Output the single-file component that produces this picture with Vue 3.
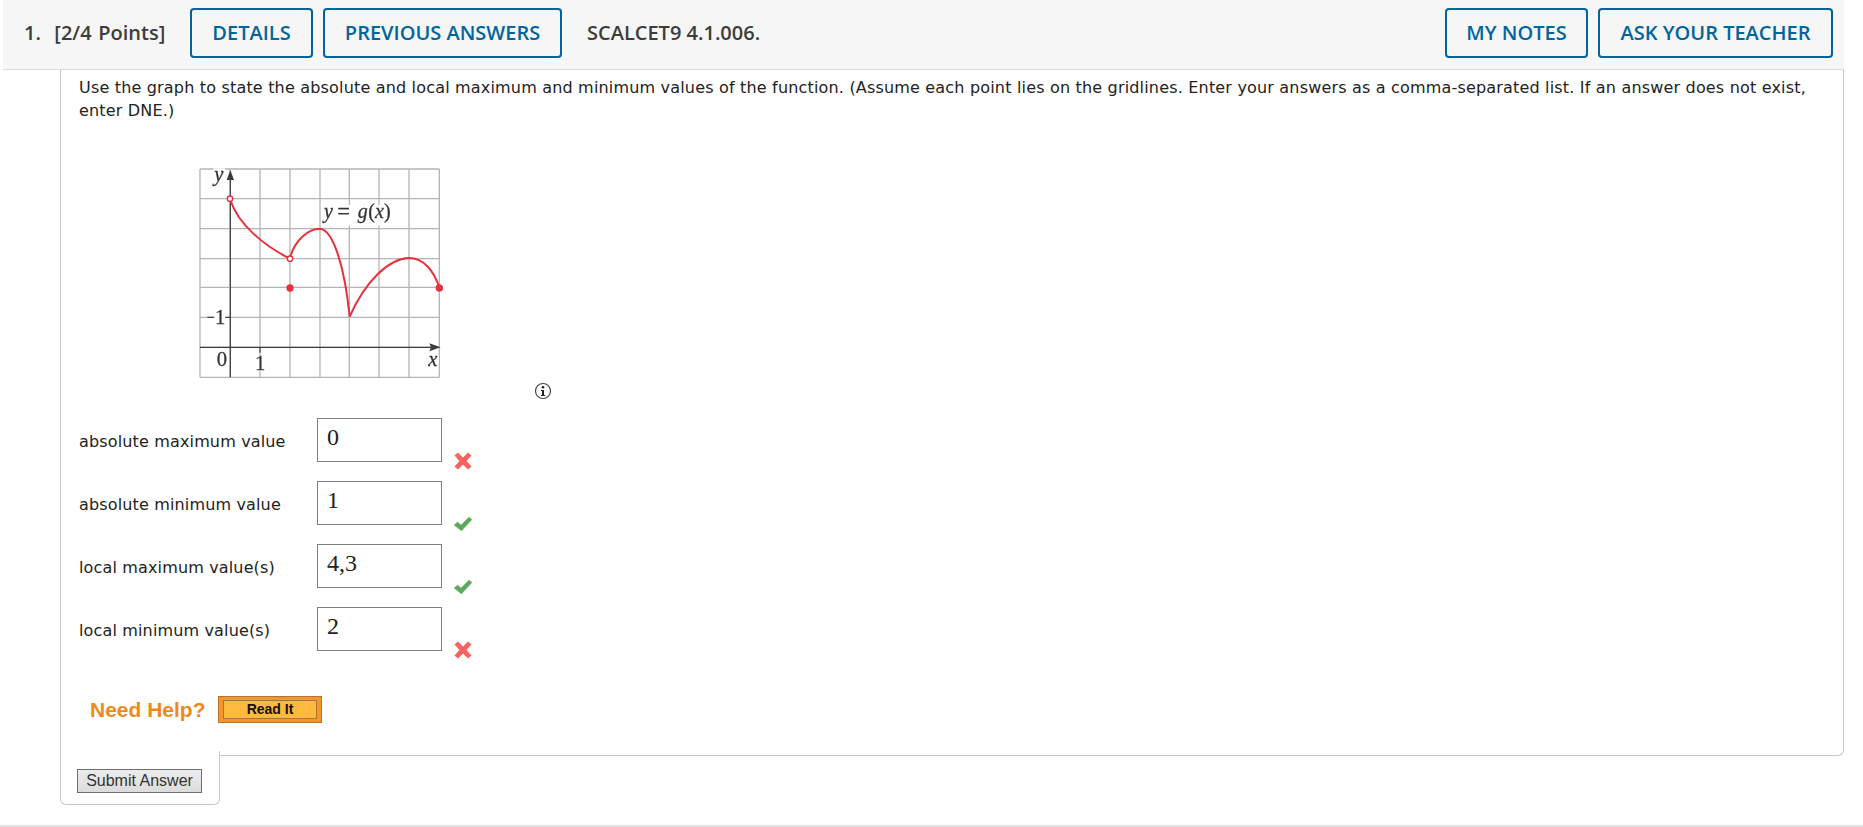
<script setup>
const rows = [
  { label: 'absolute maximum value', value: '0', ok: false },
  { label: 'absolute minimum value', value: '1', ok: true },
  { label: 'local maximum value(s)', value: '4,3', ok: true },
  { label: 'local minimum value(s)', value: '2', ok: false },
]
const vLines = [60, 150, 240, 330, 420, 508, 597, 687, 778]
const hLines = [57, 146, 236, 326, 412, 502, 592, 682]
</script>

<template>
  <div class="page">
    <header class="bar">
      <span class="num">1.&nbsp; [2/4 Points]</span>
      <button class="btn details">DETAILS</button>
      <button class="btn prev">PREVIOUS ANSWERS</button>
      <span class="code">SCALCET9 4.1.006.</span>
      <span class="spacer"></span>
      <button class="btn notes">MY NOTES</button>
      <button class="btn ask">ASK YOUR TEACHER</button>
    </header>

    <section class="panel">
      <p class="question">Use the graph to state the absolute and local maximum and minimum values of the function. (Assume each point lies on the gridlines. Enter your answers as a comma-separated list. If an answer does not exist, enter DNE.)</p>

      <div class="figure">
        <svg class="graph" width="300" height="240" viewBox="0 0 900 720">
          <g stroke="#b5b5b5" stroke-width="4" fill="none">
            <line v-for="x in vLines" :key="'v' + x" :x1="x" :x2="x" y1="57" y2="682" />
            <line v-for="y in hLines" :key="'h' + y" :y1="y" :y2="y" x1="60" x2="778" />
          </g>
          <rect x="100" y="55" width="36" height="48" fill="#fff" />
          <rect x="425" y="165" width="215" height="62" fill="#fff" />
          <rect x="102" y="610" width="42" height="50" fill="#fff" />
          <rect x="225" y="618" width="30" height="46" fill="#fff" />
          <rect x="740" y="615" width="36" height="45" fill="#fff" />
          <rect x="104" y="478" width="32" height="48" fill="#fff" />
          <g stroke="#3c3c3c" stroke-width="3.5" fill="#3c3c3c">
            <line x1="151" y1="80" x2="151" y2="682" />
            <line x1="60" y1="592" x2="760" y2="592" />
            <line x1="82" y1="502" x2="102" y2="502" />
            <line x1="136" y1="502" x2="150" y2="502" />
            <line x1="240" y1="592" x2="240" y2="608" />
            <path d="M151 60 L162 90 L140 90 Z" stroke="none" />
            <path d="M782 592 L748 580 L753 592 L748 604 Z" stroke="none" />
          </g>
          <g font-family="'Liberation Serif', serif" fill="#333" stroke="#333" stroke-width="0.8">
            <text x="103" y="93" font-size="62" font-style="italic">y</text>
            <text x="432" y="205" font-size="60" font-style="italic">y</text>
            <text x="472" y="207" font-size="68">=</text>
            <text x="533" y="205" font-size="60" font-style="italic">g</text>
            <text x="565" y="205" font-size="60">(</text>
            <text x="585" y="205" font-size="60" font-style="italic">x</text>
            <text x="612" y="205" font-size="60">)</text>
            <text x="105" y="522" font-size="62">1</text>
            <text x="110" y="648" font-size="62">0</text>
            <text x="225" y="660" font-size="62">1</text>
            <text x="745" y="648" font-size="62" font-style="italic">x</text>
          </g>
          <g fill="none" stroke="#e8303f" stroke-width="6">
            <path d="M151 150 C175 225 255 288 326 324" />
            <path d="M331 320 C345 270 385 236 420 236 C462 240 495 360 509 500" />
            <path d="M509 500 C555 395 625 326 687 324 C730 324 762 362 778 413" />
          </g>
          <circle cx="150" cy="146" r="8" fill="#fff" stroke="#e8303f" stroke-width="4" />
          <circle cx="330" cy="326" r="8" fill="#fff" stroke="#e8303f" stroke-width="4" />
          <circle cx="330" cy="414" r="11" fill="#e8303f" />
          <circle cx="778" cy="414" r="11" fill="#e8303f" />
        </svg>
        <svg class="info" width="18" height="18" viewBox="0 0 18 18">
          <circle cx="9" cy="9" r="7.5" fill="#fff" stroke="#444" stroke-width="1.2" />
          <circle cx="9" cy="5.3" r="1.3" fill="#222" />
          <path d="M7 8h3v5h1.2v1H6.9v-1H8V9H7z" fill="#222" />
        </svg>
      </div>

      <div class="answers">
        <div v-for="r in rows" :key="r.label" class="row">
          <span class="label">{{ r.label }}</span>
          <span class="field">{{ r.value }}</span>
          <svg v-if="r.ok" class="mark" width="20" height="18" viewBox="0 0 20 18">
            <path d="M1 10 L4.5 7 L8 10 L16 2 L19 4.5 L8.5 16 Z" fill="#5ca85c" stroke="#82c682" stroke-width="0.6" />
          </svg>
          <svg v-else class="mark" width="20" height="18" viewBox="0 0 20 18">
            <path d="M1.5 3.5 L5 0.5 L10 5.5 L15 0.5 L18.5 3.5 L13.5 9 L18.5 14.5 L15 17.5 L10 12.5 L5 17.5 L1.5 14.5 L6.5 9 Z" fill="#f8625f" />
          </svg>
        </div>
      </div>

      <div class="help">
        <span class="need">Need Help?</span>
        <button class="readit"><span>Read It</span></button>
      </div>
    </section>

    <div class="tab">
      <button class="submit">Submit Answer</button>
    </div>
    <div class="rule"></div>
  </div>
</template>

<style>
html, body { margin: 0; background: #fff; overflow: hidden; }
</style>

<style scoped>
.page {
  width: 1863px;
  height: 827px;
  position: relative;
  font-family: "DejaVu Sans", Verdana, sans-serif;
  color: #222;
  box-sizing: border-box;
}
.bar {
  margin-left: 3px;
  width: 1841px;
  height: 70px;
  box-sizing: border-box;
  background: #f6f6f6;
  border-bottom: 1px solid #ddd;
  display: flex;
  align-items: center;
  padding: 0 11px 4px 21px;
  font-family: "Open Sans", sans-serif;
  font-size: 20px;
  font-weight: 600;
  color: #3d3d3d;
}
.num { width: 166px; word-spacing: 1.5px; }
.code { margin-left: 25px; }
.spacer { flex: 1; }
.btn {
  height: 50px;
  box-sizing: border-box;
  border: 2px solid #00659c;
  border-radius: 4px;
  background: #f6f6f6;
  color: #00659c;
  font: 600 20px "Open Sans", sans-serif;
  padding: 0;
}
.details { width: 123px; }
.prev { width: 239px; margin-left: 10px; }
.notes { width: 143px; }
.ask { width: 235px; margin-left: 10px; }
.panel {
  margin-left: 60px;
  width: 1784px;
  height: 686px;
  box-sizing: border-box;
  border: 1px solid #c8c8c8;
  border-top: none;
  border-radius: 0 0 6px 0;
  padding: 6px 18px 0;
}
.question {
  margin: 0;
  font-size: 16px;
  letter-spacing: 0.18px;
  line-height: 23px;
  color: #222;
}
.figure {
  display: flex;
  align-items: flex-start;
  padding-left: 101px;
  height: 296px;
  position: relative;
}
.graph { filter: blur(0.45px); margin-top: 28px; }
.info { margin-left: 54px; margin-top: 260px; }
.answers { display: flex; flex-direction: column; gap: 19px; }
.row { display: flex; align-items: flex-start; height: 44px; }
.label { width: 238px; font-size: 16px; letter-spacing: 0.15px; line-height: 23px; margin-top: 12px; color: #222; }
.field {
  width: 125px;
  height: 44px;
  box-sizing: border-box;
  border: 1px solid #808080;
  padding-left: 9px;
  font: 24px/36px "Liberation Serif", serif;
  color: #222;
}
.mark { margin: 34px 0 0 11px; filter: blur(0.4px); }
.help { display: flex; align-items: center; margin: 45px 0 0 11px; }
.need {
  font: bold 21px "Liberation Sans", sans-serif;
  color: #ef8a1a;
  width: 128px;
}
.readit {
  width: 104px;
  height: 27px;
  box-sizing: border-box;
  padding: 0;
  border: 1px solid #b87424;
  background: #f5952a;
  display: flex;
  align-items: stretch;
}
.readit span {
  flex: 1;
  margin: 3px 4px;
  border: 1px solid #a87830;
  background: #ffb93f;
  font: bold 14px/17px "Liberation Sans", sans-serif;
  color: #111;
}
.tab {
  margin: -5px 0 0 60px;
  width: 160px;
  height: 54px;
  box-sizing: border-box;
  background: #fff;
  border: 1px solid #c8c8c8;
  border-top: none;
  border-radius: 0 0 6px 6px;
  padding: 18px 0 0 16px;
  position: relative;
}
.submit {
  width: 125px;
  height: 24px;
  box-sizing: border-box;
  padding: 0;
  border: 1px solid #6e6e6e;
  background: linear-gradient(#ececec, #dcdcdc);
  font: 16px "Liberation Sans", sans-serif;
  color: #333;
}
.rule { margin-top: 20px; height: 2px; background: #e2e2e2; }
</style>
